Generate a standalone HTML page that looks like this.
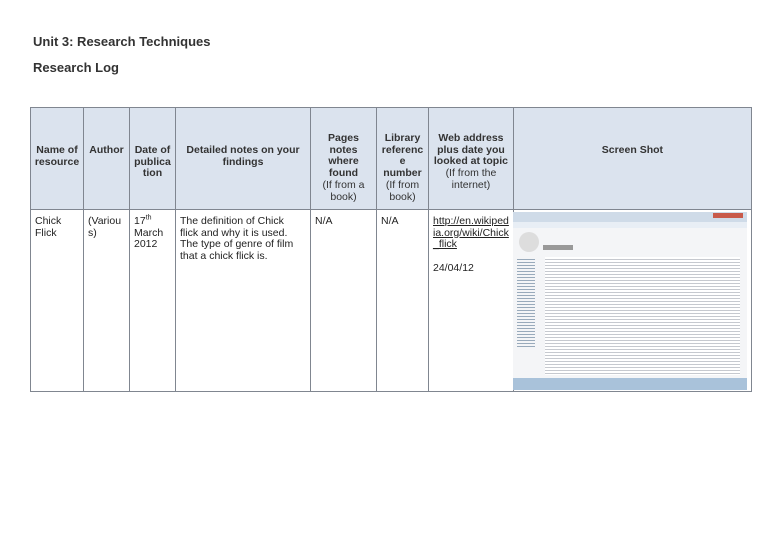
<!DOCTYPE html>
<html><head><meta charset="utf-8"><style>
body{margin:0;width:768px;height:544px;background:#fff;font-family:"Liberation Sans",Arial,sans-serif;color:#222;position:relative;overflow:hidden}
.t1{position:absolute;left:33px;top:34px;font-weight:bold;font-size:13px;color:#333}
.t2{position:absolute;left:33px;top:60px;font-weight:bold;font-size:13px;color:#333}
table{position:absolute;left:30px;top:107px;border-collapse:collapse;table-layout:fixed;font-size:10.5px;line-height:11.7px}
td{border:1px solid #808690;vertical-align:top;padding:3px 4px;overflow:hidden}
tr.h td{background:#dbe3ee;height:102px;box-sizing:border-box;vertical-align:top;text-align:center;font-weight:bold;color:#333;padding:37px 2px 0}
tr.h td.p{padding-top:25px}
tr.h td.s{padding-top:37px}
tr.h td span{font-weight:normal}
tr.b td{height:172px;padding-top:6px}
a{color:#222;text-decoration:underline}
.shot{position:absolute;left:513px;top:212px;width:234px;height:178px;background:#f4f5f7;overflow:hidden}
</style></head><body>
<div class="t1">Unit 3: Research Techniques</div>
<div class="t2">Research Log</div>
<table>
<colgroup><col style="width:53px"><col style="width:46px"><col style="width:46px"><col style="width:135px"><col style="width:66px"><col style="width:52px"><col style="width:84px"><col style="width:238px"></colgroup>
<tr class="h"><td>Name of resource</td><td>Author</td><td>Date of publica tion</td><td>Detailed notes on your findings</td><td class="p">Pages notes where found<br><span>(If from a book)</span></td><td class="p">Library referenc e number<br><span>(If from book)</span></td><td class="p">Web address plus date you looked at topic<br><span>(If from the internet)</span></td><td class="s">Screen Shot</td></tr>
<tr class="b"><td>Chick Flick</td><td>(Variou s)</td><td>17<sup style="font-size:7px;line-height:0">th</sup> March 2012</td><td style="padding-right:10px">The definition of Chick flick and why it is used. The type of genre of film that a chick flick is.</td><td>N/A</td><td>N/A</td><td><a>http://en.wikiped ia.org/wiki/Chick _flick</a><br><br>24/04/12</td><td></td></tr>
</table>
<div class="shot">
<div style="position:absolute;left:0;top:0;width:234px;height:10px;background:#cfdbe8"></div>
<div style="position:absolute;left:200px;top:1px;width:30px;height:5px;background:#c85a4a"></div>
<div style="position:absolute;left:0;top:10px;width:234px;height:6px;background:#e8eef5"></div>
<div style="position:absolute;left:6px;top:20px;width:20px;height:20px;border-radius:50%;background:#ddd"></div>
<div style="position:absolute;left:30px;top:33px;width:30px;height:5px;background:#999"></div>
<div style="position:absolute;left:4px;top:45px;width:18px;height:90px;background:repeating-linear-gradient(#f4f5f7 0 2px,#9ab 2px 3px)"></div>
<div style="position:absolute;left:32px;top:45px;width:195px;height:118px;background:repeating-linear-gradient(#fff 0 2px,#c6c9cf 2px 3px)"></div>
<div style="position:absolute;left:0;top:166px;width:234px;height:12px;background:#a9c2da"></div>
</div>
</body></html>
